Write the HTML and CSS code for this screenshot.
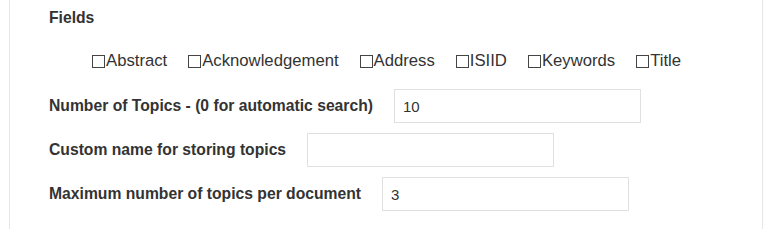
FILE: index.html
```html
<!DOCTYPE html>
<html lang="en">
<head>
    <meta charset="UTF-8">
    <meta name="viewport" content="width=device-width, initial-scale=1.0">
    <title>Topic Settings</title>
    <link rel="stylesheet" href="styles.css">
</head>
<body>
    <div class="panel">
        <h4 class="section-title">Fields</h4>

        <div class="fields">
            <label class="field"><span class="box"></span>Abstract</label>
            <label class="field"><span class="box"></span>Acknowledgement</label>
            <label class="field"><span class="box"></span>Address</label>
            <label class="field"><span class="box"></span>ISIID</label>
            <label class="field"><span class="box"></span>Keywords</label>
            <label class="field"><span class="box"></span>Title</label>
        </div>

        <div class="form-row">
            <label for="num-topics">Number of Topics - (0 for automatic search)</label>
            <input type="text" id="num-topics" value="10">
        </div>

        <div class="form-row">
            <label for="custom-name">Custom name for storing topics</label>
            <input type="text" id="custom-name" value="">
        </div>

        <div class="form-row">
            <label for="max-topics">Maximum number of topics per document</label>
            <input type="text" id="max-topics" value="3">
        </div>
    </div>
</body>
</html>
```

FILE: styles.css
```css
body {
    font-family: "Liberation Sans", Arial, sans-serif;
    margin: 0;
    padding: 0;
    background-color: #fff;
    color: #333;
}

.panel {
    margin: 0 5px 0 9px;
    height: 229px;
    border-left: 1px solid #e6e6e6;
    border-right: 1px solid #e6e6e6;
    padding: 0 39px;
    box-sizing: border-box;
}

.section-title {
    margin: 0;
    padding-top: 9px;
    font-size: 15.7px;
    font-weight: bold;
    line-height: 18px;
}

.fields {
    display: flex;
    gap: 21px;
    padding-left: 43px;
    margin-top: 25px;
    font-size: 16.7px;
    line-height: 18px;
}

.field {
    display: flex;
    align-items: center;
}

.field .box {
    display: inline-block;
    width: 11px;
    height: 11px;
    border: 1px solid #444;
    margin-right: 1px;
}

.form-row {
    display: flex;
    align-items: center;
    margin-top: 10px;
}

.fields + .form-row {
    margin-top: 19px;
}

.form-row label {
    font-size: 15.7px;
    font-weight: bold;
    margin-right: 21px;
}

.form-row input {
    width: 247px;
    height: 34px;
    box-sizing: border-box;
    border: 1px solid #e0e0e0;
    padding: 0 8px;
    font-family: "Liberation Sans", Arial, sans-serif;
    font-size: 15px;
    color: #333;
    outline: none;
}
```
